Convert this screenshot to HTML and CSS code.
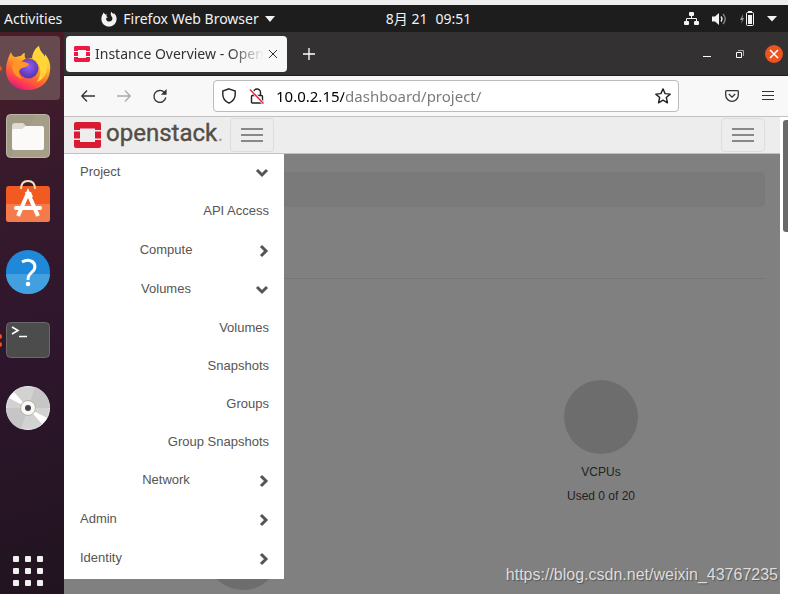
FILE: index.html
```html
<!DOCTYPE html>
<html lang="en">
<head>
<meta charset="utf-8">
<title>Instance Overview - OpenStack Dashboard</title>
<link rel="stylesheet" href="styles.css">
</head>
<body>
<header class="topbar">
  <div class="topbar-left">
    <button class="top-btn">Activities</button>
    <button class="top-btn app-menu">
      <svg width="16" height="16" viewBox="0 0 16 16"><path fill="#f2f2f2" fill-rule="evenodd" d="M2.500 1.500 4.300 3.600 6.200 3.400 5.100 5 6.800 6.300 5 7.200C5 9.200 6.300 10.600 8.200 10.600c2.200 0 3.500-1.700 3.200-3.600C11.100 5.200 8.600 4.200 10.400.5c.4 1.500 1.300 1.700 2.100 2.700l.4-1.200C14.800 3.800 15.700 5.800 15.600 8 15.500 12.300 12.200 15.600 8 15.600S.4 12.300.4 8c0-2 .6-3.700 1.500-4.900z"/></svg>
      <span>Firefox Web Browser</span>
      <svg width="10" height="6" viewBox="0 0 10 6"><path fill="#f2f2f2" d="M0 0h10L5 6z"/></svg>
    </button>
  </div>
  <button class="top-btn clock"><span>8月 21</span><span>09:51</span></button>
  <button class="top-btn tray" aria-label="System menu">
    <svg width="16" height="14" viewBox="0 0 16 14"><g fill="#f2f2f2"><rect x="5" y="0" width="5" height="4" rx="1"/><rect x="0" y="9" width="5" height="4" rx="1"/><rect x="10" y="9" width="5" height="4" rx="1"/></g><path fill="none" stroke="#f2f2f2" d="M7.500 4v2.500M2.500 9V6.500h10V9"/></svg>
    <svg width="16" height="14" viewBox="0 0 16 14"><path fill="#f2f2f2" d="M0 4.500h3L7 1v12L3 9.500H0z"/><path fill="none" stroke="#f2f2f2" stroke-width="1.300" d="M9 4.500q2 2.500 0 5"/><path fill="none" stroke="#888" stroke-width="1.300" d="M11 2q4.500 5 0 10"/></svg>
    <svg width="15" height="16" viewBox="0 0 15 16"><path fill="#999" d="M3 3 0 9h2l-1 4 3-6H2.500z"/><path fill="#f2f2f2" d="M8 0h4v2H8zM8 4h4v9H8z"/><rect x="6.500" y="1.500" width="7" height="13" rx="1" fill="none" stroke="#f2f2f2"/></svg>
    <svg width="10" height="6" viewBox="0 0 10 6"><path fill="#f2f2f2" d="M0 0h10L5 5.500z"/></svg>
  </button>
</header>
<div class="desktop">
  <nav class="dock" aria-label="Dock">
    <button class="dock-item active" aria-label="Firefox">
      <i class="dots"><b></b></i>
      <svg width="46" height="48" viewBox="0 0 46 48">
        <defs>
          <linearGradient id="fx" x1=".8" y1="0" x2=".3" y2="1"><stop offset="0" stop-color="#fff44f"/><stop offset=".35" stop-color="#ffc02c"/><stop offset=".6" stop-color="#ff7a2b"/><stop offset=".85" stop-color="#fd3c50"/><stop offset="1" stop-color="#e3158a"/></linearGradient>
          <radialGradient id="fp" cx=".5" cy=".4"><stop offset="0" stop-color="#9a5cf5"/><stop offset="1" stop-color="#5a3cb8"/></radialGradient>
        </defs>
        <path fill="url(#fx)" d="M6 8C7 12 9 13 11 13c2-1 4-1 5-1 1-2 3-3 4-3-1 3 0 5 1 6l6-1c1-7 4-10 7-12 0 5 4 7 6 11v-3c4 5 6 10 5 17-1 12-11 19-22 19C10 46 1 38 1 26 1 19 3 14 6 8z"/>
        <circle cx="23.500" cy="24.500" r="10" fill="url(#fp)"/>
        <path fill="#ff9627" d="M9 17c6 0 10 0 15 3-1 3-4 3-7 4-4 2-4 7 1 11-6-1-11-6-11-13z"/>
        <path fill="#ffd53a" d="M28 14c1-6 3-9 6-12 0 6 7 8 8 18 1 9-3 15-10 18 5-8 5-19-4-24z"/>
      </svg>
    </button>
    <button class="dock-item" aria-label="Files">
      <svg width="44" height="44" viewBox="0 0 44 44"><rect x=".5" y=".5" width="43" height="43" rx="4" fill="#a19a84" stroke="#bcb7a6"/><path fill="#aaa48f" d="M30 1h12v42H4z" opacity=".5"/><path fill="#dedbd0" d="M6 12q0-3 3-3h8l4 4h15v8H6z"/><path fill="#fbfaf8" d="M6 17q0-2 2-2h8l4-3h16q2 0 2 2v20q0 2-2 2H8q-2 0-2-2z"/></svg>
    </button>
    <button class="dock-item" aria-label="Software">
      <svg width="44" height="44" viewBox="0 0 44 44"><rect y="4" width="44" height="36" rx="3" fill="#f25a22"/><path fill="#f57b4c" d="M0 22h44v15q0 3-3 3H3q-3 0-3-3z"/><path d="M15 7q0-8 7-8t7 8" fill="none" stroke="#f7e2b9" stroke-width="2"/><path stroke="#fff" stroke-width="4" fill="none" d="M12 34 22 11l10 23"/><path fill="#fff" d="M19 10h6l2 5h-6zM9 24h26q2 2 0 4H9q-2-2 0-4z"/></svg>
    </button>
    <button class="dock-item" aria-label="Help">
      <svg width="44" height="44" viewBox="0 0 44 44"><circle cx="22" cy="22" r="22" fill="#1f88d8"/><path fill="#429fe0" d="M0 24h44a22 20 0 0 1-44 0z"/><path fill="none" stroke="#fff" stroke-width="3" d="M16 12q5-3 9-1c5 2 5 8 1 11-3 3-4 4-4 8"/><circle cx="22" cy="34" r="2.300" fill="#fff"/></svg>
    </button>
    <button class="dock-item" aria-label="Terminal">
      <i class="dots"><b></b><b></b></i>
      <svg width="44" height="36" viewBox="0 0 44 36"><rect x=".5" y=".5" width="43" height="35" rx="4" fill="#4c4c4c" stroke="#696969"/><path stroke="#fff" stroke-width="1.600" fill="none" d="m6 5 6 3.500L6 12M13 14.500h8"/></svg>
    </button>
    <button class="dock-item" aria-label="Disc">
      <svg width="44" height="44" viewBox="0 0 44 44"><circle cx="22" cy="22" r="21.500" fill="#d2d2d2" stroke="#eee"/><path fill="#c6c6c6" d="M22 22 0 22A22 22 0 0 0 15 43zM22 22l22 0A22 22 0 0 0 29 1z"/><path fill="#fff" d="M22 22 3 12 8 6zM22 22l19 10-5 6z"/><circle cx="22" cy="22" r="7.500" fill="#f8f8f8" stroke="#b9b09b"/><circle cx="22" cy="22" r="3" fill="#444"/></svg>
    </button>
    <button class="dock-item apps" aria-label="Show applications">
      <svg width="30" height="30" viewBox="0 0 30 30"><g fill="#f0f0ee"><rect width="6" height="6" rx="1"/><rect x="12" width="6" height="6" rx="1"/><rect x="24" width="6" height="6" rx="1"/><rect y="12" width="6" height="6" rx="1"/><rect x="12" y="12" width="6" height="6" rx="1"/><rect x="24" y="12" width="6" height="6" rx="1"/><rect y="24" width="6" height="6" rx="1"/><rect x="12" y="24" width="6" height="6" rx="1"/><rect x="24" y="24" width="6" height="6" rx="1"/></g></svg>
    </button>
  </nav>
  <main class="window">
    <div class="tabs">
      <div class="tab">
        <svg width="16" height="16" viewBox="0 0 16 16"><path fill="#ed1844" d="M1 0h14l1 1v4h-4V4H4v1H0V1zM0 6h4v4H0zM12 6h4v4h-4zM0 11h4v1h8v-1h4v4l-1 1H1l-1-1z"/></svg>
        <span class="tab-title">Instance Overview - Open</span>
        <button class="icon-btn" aria-label="Close tab"><svg width="8" height="8" viewBox="0 0 8 8"><path stroke="#333" d="m0 0 8 8M8 0 0 8"/></svg></button>
      </div>
      <button class="icon-btn" aria-label="New tab"><svg width="12" height="12" viewBox="0 0 12 12"><path stroke="#fff" stroke-width="1.300" d="M6 0v12M0 6h12"/></svg></button>
      <div class="win-controls">
        <button class="icon-btn" aria-label="Minimize"><svg width="8" height="8" viewBox="0 0 8 8"><path fill="#fff" d="M0 6h8v1H0z"/></svg></button>
        <button class="icon-btn" aria-label="Restore"><svg width="8" height="8" viewBox="0 0 8 8"><path fill="none" stroke="#aaa" d="M2 .5h5.500V6"/><path fill="none" stroke="#fff" d="M.5 2.500h5v5h-5z"/></svg></button>
        <button class="icon-btn close" aria-label="Close window"><svg width="8" height="8" viewBox="0 0 8 8"><path stroke="#fff" stroke-width="1.500" d="m0 0 8 8M8 0 0 8"/></svg></button>
      </div>
    </div>
    <div class="toolbar">
      <div class="nav-btns">
        <button class="icon-btn" aria-label="Back"><svg width="14" height="12" viewBox="0 0 14 12"><path fill="none" stroke="#333" stroke-width="1.300" d="M14 6H1M6 .5.8 6 6 11.500"/></svg></button>
        <button class="icon-btn" aria-label="Forward"><svg width="14" height="12" viewBox="0 0 14 12"><path fill="none" stroke="#aaa" stroke-width="1.300" d="M0 6h13M8 .5 13.200 6 8 11.500"/></svg></button>
        <button class="icon-btn" aria-label="Reload"><svg width="14" height="14" viewBox="0 0 16 16"><path fill="none" stroke="#333" stroke-width="1.500" d="M13 4A6.800 6.800 0 1 0 14.600 9.500"/><path fill="#333" d="M15.500 0v6.500H9z"/></svg></button>
      </div>
      <div class="urlbar">
        <svg width="14" height="16" viewBox="0 0 14 16"><path fill="none" stroke="#222" stroke-width="1.400" d="M7 .8 13.200 3v3.500c0 4-2.700 7-6.200 8.700C3.500 13.500.8 10.500.8 6.500V3z"/></svg>
        <svg width="14" height="16" viewBox="0 0 14 16"><path fill="none" stroke="#222" stroke-width="1.400" d="M2.500 7.500h9q1 0 1 1V14q0 1-1 1h-9q-1 0-1-1V8.500q0-1 1-1zM3.500 7V4.500a3.500 3.500 0 0 1 7 0V7"/><path stroke="#fff" stroke-width="3" d="m1 2 12 13"/><path stroke="#e22850" stroke-width="1.500" d="m0 1.500 13.500 14"/></svg>
        <input class="url" aria-label="Address" value="10.0.2.15/dashboard/project/">
        <button class="icon-btn" aria-label="Bookmark"><svg width="16" height="16" viewBox="0 0 16 16"><path fill="none" stroke="#222" stroke-width="1.400" stroke-linejoin="round" d="m8 .9 2.100 4.700 5.100.5-3.900 3.400 1.200 5.300L8 12.100l-4.500 2.700 1.200-5.300L.8 6.100l5.100-.5z"/></svg></button>
      </div>
      <div class="tools">
        <button class="icon-btn" aria-label="Pocket"><svg width="14" height="12" viewBox="0 0 14 12"><path fill="none" stroke="#333" stroke-width="1.300" d="M1.500.7h11q.8 0 .8.8V5A6.300 6.300 0 0 1 .7 5V1.500q0-.8.8-.8zM3.800 4 7 7.200 10.200 4"/></svg></button>
        <button class="icon-btn" aria-label="Menu"><svg width="12" height="10" viewBox="0 0 12 10"><path fill="#333" d="M0 0h12v1H0zM0 4h12v1H0zM0 8h12v1H0z"/></svg></button>
      </div>
    </div>
    <div class="viewport">
      <div class="page">
        <div class="navbar">
          <a class="brand" href="#">
            <svg width="27" height="26" viewBox="0 0 27 26"><path fill="#da1a32" d="M2 0h23q2 0 2 2v6h-6V6.500H6V8H0V2q0-2 2-2zM0 9.500h6v7H0zM21 9.500h6v7h-6zM0 18h6v2h15v-2h6v6q0 2-2 2H2q-2 0-2-2z"/></svg>
            <span>openstack<small>.</small></span>
          </a>
          <button class="toggle" aria-label="Toggle sidebar"><i></i><i></i><i></i></button>
          <button class="toggle right" aria-label="Toggle navigation"><i></i><i></i><i></i></button>
        </div>
        <div class="content">
          <div class="crumbs"></div>
          <hr class="rule">
          <div class="quotas">
            <div class="quota vcpus"><div class="pie"></div><div>VCPUs</div><div>Used 0 of 20</div></div>
            <div class="quota ram"><div class="pie"></div></div>
          </div>
          <nav class="side" aria-label="Project navigation">
            <a class="item" href="#">Project<svg class="down" width="12" height="8" viewBox="0 0 12 8"><path d="m1 1 5 5 5-5"/></svg></a>
            <a class="item leaf" href="#">API Access</a>
            <a class="item group" href="#"><span>Compute</span><svg width="8" height="12" viewBox="0 0 8 12"><path d="m1 1 5 5-5 5"/></svg></a>
            <a class="item group" href="#"><span>Volumes</span><svg class="down" width="12" height="8" viewBox="0 0 12 8"><path d="m1 1 5 5 5-5"/></svg></a>
            <div class="sub">
              <a class="item leaf" href="#">Volumes</a>
              <a class="item leaf" href="#">Snapshots</a>
              <a class="item leaf" href="#">Groups</a>
              <a class="item leaf" href="#">Group Snapshots</a>
              <a class="item group" href="#"><span>Network</span><svg width="8" height="12" viewBox="0 0 8 12"><path d="m1 1 5 5-5 5"/></svg></a>
            </div>
            <a class="item" href="#">Admin<svg width="8" height="12" viewBox="0 0 8 12"><path d="m1 1 5 5-5 5"/></svg></a>
            <a class="item" href="#">Identity<svg width="8" height="12" viewBox="0 0 8 12"><path d="m1 1 5 5-5 5"/></svg></a>
          </nav>
        </div>
      </div>
      <div class="scrollbar"><div class="thumb"></div></div>
    </div>
  </main>
</div>
<div class="watermark">https://blog.csdn.net/weixin_43767235</div>
</body>
</html>
```
FILE: styles.css
```css
* { box-sizing: border-box; }
body {
  margin: 0;
  height: 100vh;
  display: flex;
  flex-direction: column;
  position: relative;
  overflow: hidden;
  border-top: 5px solid #eee;
  font: 14px/20px "Noto Sans", "Noto Sans CJK SC", sans-serif;
}
button, input { font: inherit; border: 0; padding: 0; background: none; color: inherit; }
svg { display: block; flex: none; overflow: visible; }
a { color: inherit; text-decoration: none; }

.topbar {
  flex: none;
  height: 27px;
  display: grid;
  grid-template-columns: 1fr auto 1fr;
  align-items: center;
  padding: 0 11px 0 4px;
  background: #1d1d1d;
  color: #f2f2f2;
}
.topbar-left { display: flex; gap: 39px; }
.top-btn { display: flex; align-items: center; white-space: nowrap; }
.app-menu { gap: 6px; }
.clock { gap: 8px; margin-left: 76px; }
.tray { gap: 12px; justify-self: end; }

.desktop { flex: 1; min-height: 0; display: flex; }
.dock {
  flex: none;
  width: 64px;
  display: flex;
  flex-direction: column;
  padding: 4px 4px 8px 0;
  background: linear-gradient(165deg, #4b1d29 0, #391a2c 22%, #2e162c 55%, #211420 100%);
}
.dock-item {
  position: relative;
  flex: none;
  height: 68px;
  padding-right: 4px;
  display: flex;
  align-items: center;
  justify-content: center;
}
.dock-item.active { height: 64px; margin-bottom: 2px; border-radius: 0 4px 4px 0; background: #674a50; }
.dock-item.apps { height: 30px; margin-top: auto; }
.dots { position: absolute; left: -3px; top: 0; bottom: 0; display: flex; flex-direction: column; justify-content: center; gap: 3px; }
.dots b { width: 5px; height: 5px; border-radius: 50%; background: #e95420; }

.window { flex: 1; min-width: 0; display: flex; flex-direction: column; }
.icon-btn { display: flex; align-items: center; justify-content: center; }
.tabs {
  flex: none;
  height: 44px;
  display: flex;
  align-items: center;
  gap: 16px;
  padding: 0 5px 0 2px;
  background: #333132;
  border-bottom: 1px solid #201a20;
}
.tab {
  width: 221px;
  height: 36px;
  display: flex;
  align-items: center;
  padding: 0 12px 0 8px;
  gap: 5px;
  border-radius: 4px;
  background: #f8f8f8;
  color: #333;
}
.tab-title {
  flex: 1;
  white-space: nowrap;
  -webkit-mask-image: linear-gradient(90deg, #000 80%, transparent);
  mask-image: linear-gradient(90deg, #000 80%, transparent);
}
.win-controls { margin-left: auto; display: flex; align-items: center; gap: 25px; }
.close { width: 18px; height: 18px; border-radius: 50%; background: #e95420; margin-left: -4px; }

.toolbar {
  flex: none;
  height: 41px;
  display: flex;
  align-items: center;
  padding: 0 14px 0 17px;
  background: #f8f8f8;
  border-bottom: 1px solid #c2c2c2;
}
.nav-btns { display: flex; gap: 22px; width: 132px; }
.urlbar {
  flex: 1;
  max-width: 466px;
  height: 32px;
  display: flex;
  align-items: center;
  gap: 14px;
  padding: 0 7px 0 8px;
  border: 1px solid #bbb;
  border-radius: 4px;
  background: #fff;
}
.url {
  flex: 1;
  min-width: 0;
  margin-left: -2px;
  outline: 0;
  font-size: 15px;
  background: linear-gradient(90deg, #000 68px, #777 68px);
  -webkit-background-clip: text;
  background-clip: text;
  color: transparent;
}
.tools { margin-left: auto; display: flex; gap: 23px; }

.viewport { flex: 1; min-height: 0; display: flex; font-family: "Liberation Sans", sans-serif; }
.page { flex: 1; min-width: 0; display: flex; flex-direction: column; background: #808080; }
.scrollbar { flex: none; width: 8px; padding: 3px 0 0 3px; background: #fff; }
.thumb { height: 112px; border-radius: 3px 0 0 3px; background: #696969; }
.navbar {
  flex: none;
  height: 37px;
  display: flex;
  align-items: center;
  padding: 0 15px 0 10px;
  background: #ededed;
  border-bottom: 1px solid #c2c2c2;
}
.brand { display: flex; align-items: center; gap: 5px; width: 156px; color: #554d46; font: 400 24px/28px Roboto, sans-serif; -webkit-text-stroke: 0.4px #554d46; }
.brand span { margin-top: -4px; }
.brand small { font-size: 24px; color: #aaa; -webkit-text-stroke: 0; }
.toggle {
  width: 44px;
  height: 34px;
  display: flex;
  flex-direction: column;
  align-items: center;
  justify-content: center;
  gap: 4px;
  border: 1px solid #ddd;
  border-radius: 4px;
}
.toggle i { width: 22px; height: 2px; background: #888; }
.toggle.right { margin-left: auto; }

.content { position: relative; flex: 1; min-height: 0; overflow: hidden; color: #222; }
.crumbs { height: 35px; margin: 18px 15px 0; border-radius: 4px; background: #7a7a7a; }
.rule { margin: 71px 15px 101px; border: 0; height: 1px; background: #757575; }
.quotas { display: grid; grid-template-columns: 1fr 1fr; font-size: 12px; line-height: 24px; text-align: center; }
.quota { height: 136px; }
.pie { width: 74px; height: 74px; margin: 0 auto 6px; border-radius: 50%; background: #6d6d6d; }
.vcpus { grid-column: 2; }
.ram { grid-column: 1; }

.side {
  position: absolute;
  left: 0;
  top: 0;
  width: 220px;
  padding-bottom: 3px;
  display: flex;
  flex-direction: column;
  gap: 3px;
  background: #fff;
  color: #555;
  font-size: 13px;
}
.sub { display: flex; flex-direction: column; gap: 2px; }
.item { height: 36px; display: flex; align-items: center; justify-content: space-between; padding: 0 16px; }
.item svg { margin-top: 2px; fill: none; stroke: #555; stroke-width: 3; }
.leaf { justify-content: flex-end; padding-right: 15px; }
.group span { width: 172px; text-align: center; }

.watermark {
  position: absolute;
  right: 10px;
  bottom: 9px;
  color: #ddd;
  font: 16px/20px "Liberation Sans", sans-serif;
  text-shadow: 1px 1px 1px #555;
}
```
